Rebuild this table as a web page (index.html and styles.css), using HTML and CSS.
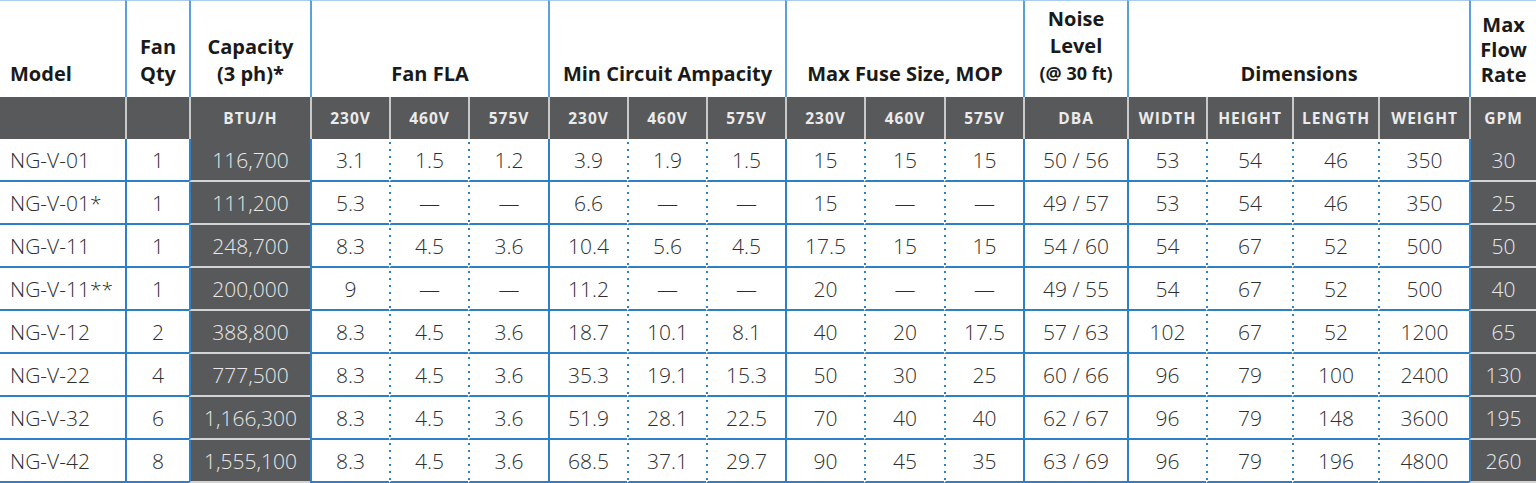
FILE: index.html
```html
<!DOCTYPE html>
<html>
<head>
<meta charset="utf-8">
<link rel="stylesheet" href="styles.css">
</head>
<body>
<table class="spec">
  <colgroup>
    <col class="c-model"><col class="c-qty"><col class="c-cap">
    <col class="c79"><col class="c79"><col class="c80">
    <col class="c79"><col class="c79"><col class="c79">
    <col class="c79"><col class="c80"><col class="c79">
    <col class="c-noise">
    <col class="c79"><col class="c86"><col class="c86"><col class="c91">
    <col class="c-flow">
  </colgroup>
  <thead>
    <tr class="head">
      <th class="left first">Model</th>
      <th>Fan<br>Qty</th>
      <th>Capacity<br>(3 ph)*</th>
      <th colspan="3">Fan FLA</th>
      <th colspan="3">Min Circuit Ampacity</th>
      <th colspan="3">Max Fuse Size, MOP</th>
      <th>Noise<br>Level<br><span class="small">(@ 30 ft)</span></th>
      <th colspan="4">Dimensions</th>
      <th class="tight">Max<br>Flow<br>Rate</th>
    </tr>
    <tr class="units">
      <th class="first"></th>
      <th></th>
      <th>BTU/H</th>
      <th>230V</th><th>460V</th><th>575V</th>
      <th>230V</th><th>460V</th><th>575V</th>
      <th>230V</th><th>460V</th><th>575V</th>
      <th>DBA</th>
      <th>WIDTH</th><th>HEIGHT</th><th>LENGTH</th><th>WEIGHT</th>
      <th>GPM</th>
    </tr>
  </thead>
  <tbody>
    <tr>
      <td class="model">NG-V-01</td><td>1</td><td class="dark">116,700</td>
      <td>3.1</td><td class="dot">1.5</td><td class="dot">1.2</td>
      <td>3.9</td><td class="dot">1.9</td><td class="dot">1.5</td>
      <td>15</td><td class="dot">15</td><td class="dot">15</td>
      <td>50 / 56</td>
      <td>53</td><td class="dot">54</td><td class="dot">46</td><td class="dot">350</td>
      <td class="dark">30</td>
    </tr>
    <tr>
      <td class="model">NG-V-01*</td><td>1</td><td class="dark">111,200</td>
      <td>5.3</td><td class="dot">—</td><td class="dot">—</td>
      <td>6.6</td><td class="dot">—</td><td class="dot">—</td>
      <td>15</td><td class="dot">—</td><td class="dot">—</td>
      <td>49 / 57</td>
      <td>53</td><td class="dot">54</td><td class="dot">46</td><td class="dot">350</td>
      <td class="dark">25</td>
    </tr>
    <tr>
      <td class="model">NG-V-11</td><td>1</td><td class="dark">248,700</td>
      <td>8.3</td><td class="dot">4.5</td><td class="dot">3.6</td>
      <td>10.4</td><td class="dot">5.6</td><td class="dot">4.5</td>
      <td>17.5</td><td class="dot">15</td><td class="dot">15</td>
      <td>54 / 60</td>
      <td>54</td><td class="dot">67</td><td class="dot">52</td><td class="dot">500</td>
      <td class="dark">50</td>
    </tr>
    <tr>
      <td class="model">NG-V-11**</td><td>1</td><td class="dark">200,000</td>
      <td>9</td><td class="dot">—</td><td class="dot">—</td>
      <td>11.2</td><td class="dot">—</td><td class="dot">—</td>
      <td>20</td><td class="dot">—</td><td class="dot">—</td>
      <td>49 / 55</td>
      <td>54</td><td class="dot">67</td><td class="dot">52</td><td class="dot">500</td>
      <td class="dark">40</td>
    </tr>
    <tr>
      <td class="model">NG-V-12</td><td>2</td><td class="dark">388,800</td>
      <td>8.3</td><td class="dot">4.5</td><td class="dot">3.6</td>
      <td>18.7</td><td class="dot">10.1</td><td class="dot">8.1</td>
      <td>40</td><td class="dot">20</td><td class="dot">17.5</td>
      <td>57 / 63</td>
      <td>102</td><td class="dot">67</td><td class="dot">52</td><td class="dot">1200</td>
      <td class="dark">65</td>
    </tr>
    <tr>
      <td class="model">NG-V-22</td><td>4</td><td class="dark">777,500</td>
      <td>8.3</td><td class="dot">4.5</td><td class="dot">3.6</td>
      <td>35.3</td><td class="dot">19.1</td><td class="dot">15.3</td>
      <td>50</td><td class="dot">30</td><td class="dot">25</td>
      <td>60 / 66</td>
      <td>96</td><td class="dot">79</td><td class="dot">100</td><td class="dot">2400</td>
      <td class="dark">130</td>
    </tr>
    <tr>
      <td class="model">NG-V-32</td><td>6</td><td class="dark">1,166,300</td>
      <td>8.3</td><td class="dot">4.5</td><td class="dot">3.6</td>
      <td>51.9</td><td class="dot">28.1</td><td class="dot">22.5</td>
      <td>70</td><td class="dot">40</td><td class="dot">40</td>
      <td>62 / 67</td>
      <td>96</td><td class="dot">79</td><td class="dot">148</td><td class="dot">3600</td>
      <td class="dark">195</td>
    </tr>
    <tr>
      <td class="model">NG-V-42</td><td>8</td><td class="dark">1,555,100</td>
      <td>8.3</td><td class="dot">4.5</td><td class="dot">3.6</td>
      <td>68.5</td><td class="dot">37.1</td><td class="dot">29.7</td>
      <td>90</td><td class="dot">45</td><td class="dot">35</td>
      <td>63 / 69</td>
      <td>96</td><td class="dot">79</td><td class="dot">196</td><td class="dot">4800</td>
      <td class="dark">260</td>
    </tr>
  </tbody>
</table>
</body>
</html>
```
FILE: styles.css
```css
html, body {
  margin: 0;
  padding: 0;
  background: #ffffff;
}

.spec {
  width: 1536px;
  table-layout: fixed;
  border-collapse: separate;
  border-spacing: 0;
  font-family: "Open Sans", "Liberation Sans", sans-serif;
  color: #333333;
}

.c-model { width: 125px; }
.c-qty { width: 64px; }
.c-cap { width: 121px; }
.c79 { width: 79px; }
.c80 { width: 80px; }
.c86 { width: 86px; }
.c91 { width: 91px; }
.c-noise { width: 104px; }
.c-flow { width: 67px; }

.head th {
  height: 97px;
  box-sizing: border-box;
  border-top: 1px solid #a9cdea;
  border-left: 2px solid #5aa0da;
  vertical-align: bottom;
  padding: 0 0 10px 0;
  font-size: 20px;
  font-weight: 700;
  line-height: 27px;
  color: #1a1a1a;
  text-align: center;
}

.head th.first {
  border-left: none;
}

.head th.left {
  text-align: left;
  padding-left: 10px;
}

.head th.tight {
  line-height: 25px;
}

.head .small {
  font-size: 18px;
}

.units th {
  height: 42px;
  box-sizing: border-box;
  background: #58595b;
  border-left: 2px solid #c9c9c9;
  color: #ebebeb;
  font-size: 15.5px;
  font-weight: 700;
  letter-spacing: 1px;
  text-align: center;
  vertical-align: middle;
  padding: 0;
}

.units th.first {
  border-left: none;
}

tbody td {
  height: 43px;
  box-sizing: border-box;
  border-left: 2px solid #2f7fc7;
  border-bottom: 2px solid #2f7fc7;
  font-size: 21px;
  font-weight: 300;
  text-align: center;
  vertical-align: middle;
  padding: 0;
  white-space: nowrap;
  color: #2e2e2e;
}

tbody td.model {
  border-left: none;
  text-align: left;
  padding-left: 10px;
}

tbody td.dot {
  border-left: 2px solid transparent;
  background-image: linear-gradient(to bottom, #2f7fc7 0, #2f7fc7 2px, transparent 2px, transparent 7px);
  background-size: 2px 7px;
  background-repeat: repeat-y;
  background-origin: border-box;
  background-position: 0 3px;
}

tbody td.dark {
  background: #58595b;
  color: #e8e8e8;
  border-bottom: 2px solid #d4d4d4;
}
```
